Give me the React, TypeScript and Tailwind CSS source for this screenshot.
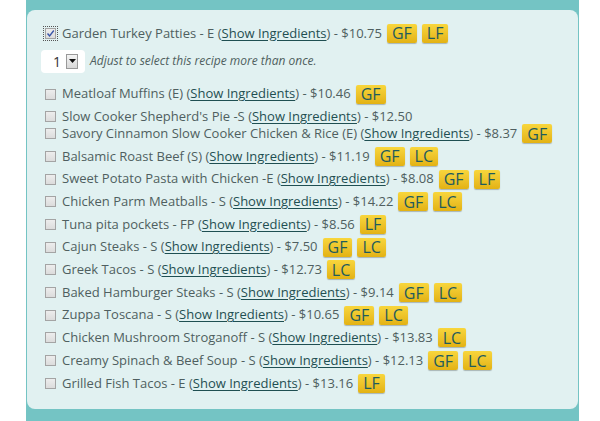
type Recipe = {
  name: string;
  price: string;
  tags: string[];
};

const recipes: Recipe[] = [
  { name: "Meatloaf Muffins (E)", price: "$10.46", tags: ["GF"] },
  { name: "Slow Cooker Shepherd's Pie -S", price: "$12.50", tags: [] },
  { name: "Savory Cinnamon Slow Cooker Chicken & Rice (E)", price: "$8.37", tags: ["GF"] },
  { name: "Balsamic Roast Beef (S)", price: "$11.19", tags: ["GF", "LC"] },
  { name: "Sweet Potato Pasta with Chicken -E", price: "$8.08", tags: ["GF", "LF"] },
  { name: "Chicken Parm Meatballs - S", price: "$14.22", tags: ["GF", "LC"] },
  { name: "Tuna pita pockets - FP", price: "$8.56", tags: ["LF"] },
  { name: "Cajun Steaks - S", price: "$7.50", tags: ["GF", "LC"] },
  { name: "Greek Tacos - S", price: "$12.73", tags: ["LC"] },
  { name: "Baked Hamburger Steaks - S", price: "$9.14", tags: ["GF", "LC"] },
  { name: "Zuppa Toscana - S", price: "$10.65", tags: ["GF", "LC"] },
  { name: "Chicken Mushroom Stroganoff - S", price: "$13.83", tags: ["LC"] },
  { name: "Creamy Spinach & Beef Soup - S", price: "$12.13", tags: ["GF", "LC"] },
  { name: "Grilled Fish Tacos - E", price: "$13.16", tags: ["LF"] },
];

function Badge({ label }: { label: string }) {
  return (
    <span className="ml-[5px] first:ml-[6px] inline-flex h-[19px] items-center rounded-[2px] bg-gradient-to-b from-[#f8d63c] to-[#e3b212] px-[5px] text-[16px] leading-none text-[#1f5b5d] shadow-[0_1px_1px_rgba(0,0,0,0.25)]">
      {label}
    </span>
  );
}

function Box({ checked }: { checked?: boolean }) {
  return (
    <span
      className={
        "mr-[5px] flex h-[13px] w-[13px] shrink-0 items-center justify-center " +
        (checked ? "outline outline-1 outline-dotted outline-[#555] outline-offset-0" : "")
      }
    >
      <span className="flex h-[11px] w-[11px] items-center justify-center border border-[#a4a4a4] bg-gradient-to-b from-[#ededed] to-[#dcdcdc]">
        {checked && (
          <svg width="9" height="9" viewBox="0 0 9 9">
            <path d="M1.5 4.5 L3.6 7 L7.8 1.5" fill="none" stroke="#3a56a8" strokeWidth="1.4" />
          </svg>
        )}
      </span>
    </span>
  );
}

function Row({ recipe, checked }: { recipe: Recipe; checked?: boolean }) {
  const hasTags = recipe.tags.length > 0;
  return (
    <div className={"flex items-center whitespace-nowrap " + (hasTags ? "h-[22.7px]" : "h-[17px] pt-[6px]")}>
      <Box checked={checked} />
      <span>
        {recipe.name} (
        <a className="text-[#1f4f52] underline decoration-[#1f4f52] underline-offset-2">Show Ingredients</a>) -{" "}
        {recipe.price}
      </span>
      {recipe.tags.map((t) => (
        <Badge key={t} label={t} />
      ))}
    </div>
  );
}

export default function App() {
  return (
    <div className="h-[421px] w-[600px] overflow-hidden bg-white font-['Open_Sans',sans-serif] text-[13px] text-[#4f5f60]">
      <div className="ml-[26px] h-full w-[553px] bg-[#74c4c4] pb-[12px] pl-[1px] pr-[1px] pt-[10px]">
        <div className="rounded-[8px] bg-[#e1f1f1] pb-[14px] pl-[17px] pt-[12px]">
          <Row recipe={{ name: "Garden Turkey Patties - E", price: "$10.75", tags: ["GF", "LF"] }} checked />
          <div className="mb-[10px] mt-[5px] flex h-[23px] items-center">
            <div className="-ml-[3px] flex h-[23px] w-[44px] items-center rounded-[4px] bg-white pl-[12px] text-[14px] text-[#333]">
              <span>1</span>
              <span className="ml-[5px] flex h-[15px] w-[12px] items-center justify-center border border-[#999] bg-gradient-to-b from-[#f4f4f4] to-[#d8d8d8]">
                <svg width="7" height="4" viewBox="0 0 7 4">
                  <path d="M0 0 L7 0 L3.5 4 Z" fill="#111" />
                </svg>
              </span>
            </div>
            <span className="ml-[5px] text-[12px] italic">Adjust to select this recipe more than once.</span>
          </div>
          {recipes.map((r) => (
            <Row key={r.name} recipe={r} />
          ))}
        </div>
      </div>
    </div>
  );
}
